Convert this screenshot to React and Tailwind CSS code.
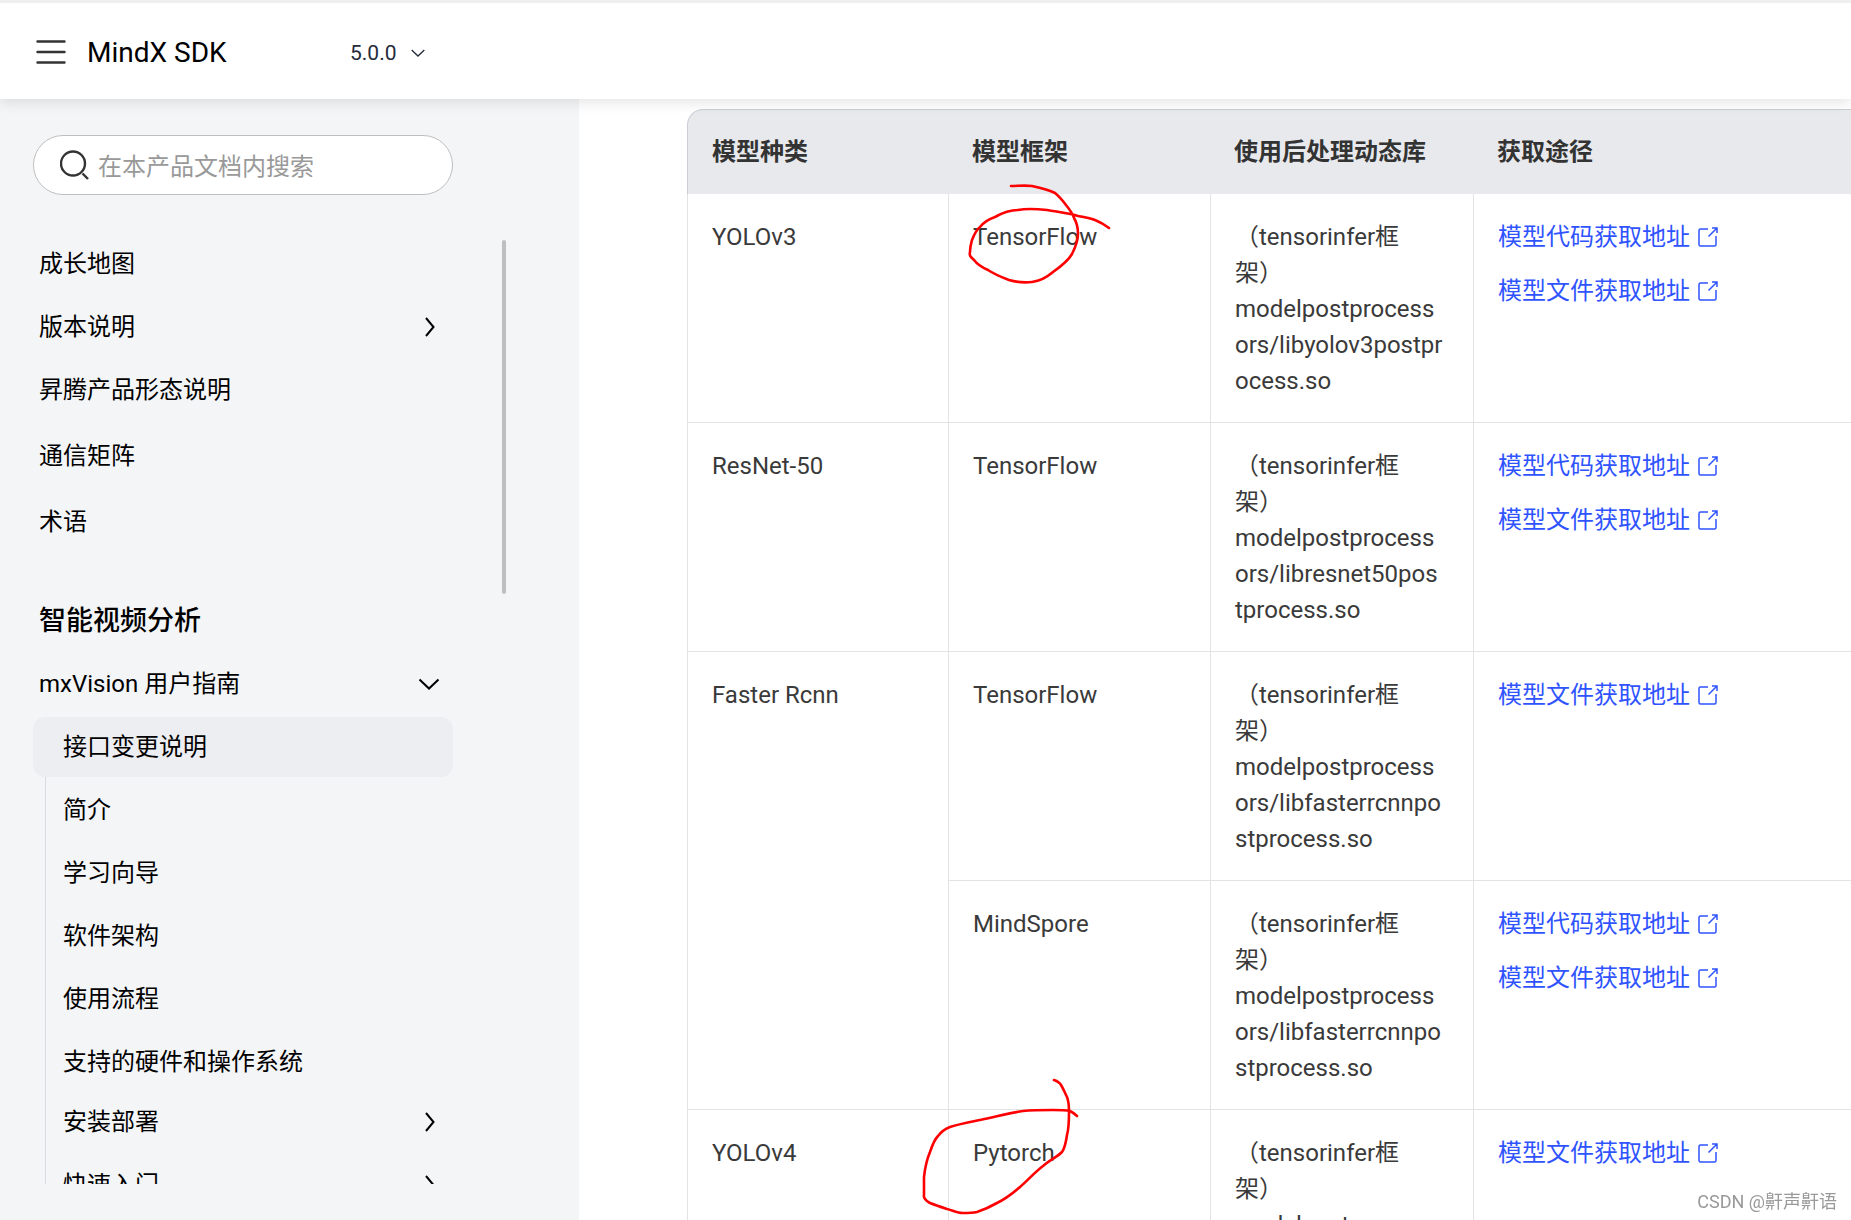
const topItems = [
  { label: '成长地图', gap: 'mb-[3px]' },
  { label: '版本说明', gap: 'mb-[3px]', expandable: true },
  { label: '昇腾产品形态说明', gap: 'mb-1.5' },
  { label: '通信矩阵', gap: 'mb-1.5' },
  { label: '术语', gap: 'mb-0' },
]

const guideItems = [
  { label: '接口变更说明', gap: 'mb-[3px]', active: true },
  { label: '简介', gap: 'mb-[3px]' },
  { label: '学习向导', gap: 'mb-[3px]' },
  { label: '软件架构', gap: 'mb-[3px]' },
  { label: '使用流程', gap: 'mb-[3px]' },
  { label: '支持的硬件和操作系统', gap: 'mb-0' },
  { label: '安装部署', gap: 'mb-[3px]', expandable: true },
  { label: '快速入门', gap: 'mb-[3px]', expandable: true },
]

const CODE = '模型代码获取地址'
const FILE = '模型文件获取地址'

const rows = [
  {
    model: 'YOLOv3',
    framework: 'TensorFlow',
    lib: '（tensorinfer框\n架）\nmodelpostprocess\nors/libyolov3postpr\nocess.so',
    links: [CODE, FILE],
    mark: 'first',
  },
  {
    model: 'ResNet-50',
    framework: 'TensorFlow',
    lib: '（tensorinfer框\n架）\nmodelpostprocess\nors/libresnet50pos\ntprocess.so',
    links: [CODE, FILE],
  },
  {
    model: 'Faster Rcnn',
    span: 2,
    framework: 'TensorFlow',
    lib: '（tensorinfer框\n架）\nmodelpostprocess\nors/libfasterrcnnpo\nstprocess.so',
    links: [FILE],
  },
  {
    framework: 'MindSpore',
    lib: '（tensorinfer框\n架）\nmodelpostprocess\nors/libfasterrcnnpo\nstprocess.so',
    links: [CODE, FILE],
  },
  {
    model: 'YOLOv4',
    framework: 'Pytorch',
    lib: '（tensorinfer框\n架）\nmodelpostprocess\nors/libyolov4postpr\nocess.so',
    links: [FILE],
    mark: 'last',
  },
]

function ChevronRight() {
  return (
    <svg viewBox="0 0 24 24" className="size-6" fill="none" stroke="currentColor" strokeWidth="2" aria-hidden="true">
      <path d="M9 3l7.500 9L9 21" />
    </svg>
  )
}

function ChevronDown({ className }) {
  return (
    <svg viewBox="0 0 24 24" className={className} fill="none" stroke="currentColor" strokeWidth="2" aria-hidden="true">
      <path d="M2.500 7.500l9.500 9 9.500-9" />
    </svg>
  )
}

function ExternalIcon() {
  return (
    <svg viewBox="0 0 20 20" className="size-5" fill="none" stroke="currentColor" strokeWidth="1.500" aria-hidden="true">
      <path d="M10 2H2.500a1.500 1.500 0 0 0-1.500 1.500v14a1.500 1.500 0 0 0 1.500 1.500h14a1.500 1.500 0 0 0 1.500-1.500V9" />
      <path d="M10.500 9.500L19 1M14 1h5v5" />
    </svg>
  )
}

function NavRow({ item, nested }) {
  return (
    <li className={item.gap}>
      <a
        href="#"
        className={`relative flex h-[60px] items-center justify-between rounded-xl pr-3 ${nested ? 'pl-[30px]' : 'pl-1.5'} ${item.active ? 'bg-[#edeef2]' : ''}`}
      >
        <span>{item.label}</span>
        {item.expandable ? <ChevronRight /> : null}
      </a>
    </li>
  )
}

function PenMark({ name }) {
  if (name === 'first') {
    return (
      <svg viewBox="0 0 150 108" className="pointer-events-none absolute -top-3.5 left-3.5 h-[108px] w-[150px]" fill="none" stroke="#ff0000" strokeWidth="2.600" strokeLinecap="round" aria-hidden="true">
        <path d="M48 6C55 6 62 5 69 6C78 8 86 10 92 13C97 17 100 21 103 25C107 30 110 34 111 38C114 43 115 48 115 54C115 61 112 68 109 74C105 81 97 87 90 92C83 98 77 101 69 102C61 103 53 102 46 100C38 97 31 94 25 90C18 87 14 84 11 80C8 77 6 76 7 72C7 67 8 64 9 60C11 55 13 50 17 47C21 42 26 39 32 37C39 33 47 30 55 30C65 28 75 29 84 30C95 32 105 33 115 36C121 37 127 38 132 40C137 42 142 45 146 48" />
      </svg>
    )
  }
  return (
    <svg viewBox="0 0 164 144" className="pointer-events-none absolute -top-9 -left-8 h-[144px] w-[164px]" fill="none" stroke="#ff0000" strokeWidth="2.600" strokeLinecap="round" aria-hidden="true">
      <path d="M137 6C140 7 143 9 144 11C147 16 148 19 150 23C152 28 152 33 152 38C152 46 152 54 150 61C149 68 148 74 145 78C140 83 133 86 126 92C118 98 111 106 103 113C96 119 88 125 80 129C73 133 66 136 60 138C55 139 51 139 46 139C40 139 35 136 30 135C24 133 18 131 13 129C10 127 6 125 7 121C7 115 7 108 7 103C8 94 10 85 13 78C15 72 18 65 21 62C24 58 28 55 33 53C42 50 53 48 63 46C78 43 92 39 106 37C116 36 126 36 136 36C142 36 148 36 153 37C155 38 158 40 160 42" />
    </svg>
  )
}

const cell = 'relative border-b border-l border-[#e3e3e3] px-6 pt-[25px] pb-[23px] align-top'
const headCell = 'border-t border-[#cbced5] bg-[#e8e9ed] p-6 font-bold whitespace-nowrap'

export default function App() {
  return (
    <div className="flex h-screen flex-col overflow-hidden bg-white font-[Roboto,'Noto_Sans_CJK_SC',sans-serif] text-[24px] leading-[36px] text-black">
      <header className="relative z-10 flex h-[99px] shrink-0 items-center border-t-[3px] border-[#efefef] bg-white pt-1 pl-9 shadow-[0_4px_12px_rgba(0,0,0,0.1)]">
        <button type="button" aria-label="菜单" className="mr-[21px] text-[#333]">
          <svg viewBox="0 0 30 30" className="size-[30px]" fill="none" stroke="currentColor" strokeWidth="2.400" strokeLinecap="round" aria-hidden="true">
            <path d="M1.500 3.500h27M1.500 14h27M1.500 24.500h27" />
          </svg>
        </button>
        <h1 className="w-[263px] text-[28px] font-normal">MindX SDK</h1>
        <div className="relative flex items-center text-[#252b3a]">
          <select aria-label="版本" className="w-[76px] appearance-none bg-transparent text-[21px] outline-none">
            <option>5.0.0</option>
          </select>
          <ChevronDown className="pointer-events-none absolute right-0 size-4" />
        </div>
      </header>

      <div className="flex min-h-0 flex-1">
        <aside className="flex w-[579px] shrink-0 flex-col bg-[#f4f5f7] pt-9 pb-9 pl-[33px]">
          <label className="flex h-[60px] w-[420px] shrink-0 items-center gap-2 rounded-full border border-[#bfbfbf] bg-white pl-[26px]">
            <svg viewBox="0 0 30 30" className="size-[30px] text-[#333]" fill="none" stroke="currentColor" strokeWidth="2.400" aria-hidden="true">
              <circle cx="13" cy="13.500" r="12" />
              <path d="M22.500 23.500l5.500 5.500" />
            </svg>
            <input type="search" aria-label="搜索" placeholder="在本产品文档内搜索" className="w-72 bg-transparent pt-[3px] outline-none placeholder:text-[#999]" />
          </label>

          <div className="mt-[39px] flex min-h-0 flex-1 overflow-hidden">
            <nav className="w-[420px]">
              <ul>
                {topItems.map((item) => (
                  <NavRow key={item.label} item={item} />
                ))}
              </ul>
              <h2 className="mt-[39px] mb-[3px] pl-1.5 text-[27px] leading-[60px] font-medium">智能视频分析</h2>
              <button type="button" className="mb-[3px] flex h-[60px] w-full items-center justify-between pr-3 pl-1.5">
                <span>mxVision 用户指南</span>
                <ChevronDown className="size-6" />
              </button>
              <ul className="relative before:absolute before:inset-y-0 before:left-3 before:w-px before:bg-[#d9dadd]">
                {guideItems.map((item) => (
                  <NavRow key={item.label} item={item} nested />
                ))}
              </ul>
            </nav>
            <div className="mt-1.5 ml-[49px] h-[354px] w-1 rounded-full bg-[#bfbfbf]" />
          </div>
        </aside>

        <main className="min-w-0 flex-1 overflow-hidden pt-2.5 pl-[108px]">
          <table className="w-full table-fixed border-separate border-spacing-0 text-[#3a3a3a]">
            <colgroup>
              <col className="w-[261px]" />
              <col className="w-[262px]" />
              <col className="w-[263px]" />
              <col />
            </colgroup>
            <thead>
              <tr className="text-left text-[#333]">
                <th className={`${headCell} rounded-tl-2xl border-l`}>模型种类</th>
                <th className={headCell}>模型框架</th>
                <th className={headCell}>使用后处理动态库</th>
                <th className={headCell}>获取途径</th>
              </tr>
            </thead>
            <tbody>
              {rows.map((row, i) => (
                <tr key={i}>
                  {row.model ? <td rowSpan={row.span || 1} className={cell}>{row.model}</td> : null}
                  <td className={cell}>
                    {row.framework}
                    {row.mark ? <PenMark name={row.mark} /> : null}
                  </td>
                  <td className={`${cell} whitespace-pre`}>{row.lib}</td>
                  <td className={cell}>
                    <div className="flex flex-col items-start gap-[18px]">
                      {row.links.map((link) => (
                        <a key={link} href="#" className="flex items-center gap-2 text-[#2f54ff]">
                          {link}
                          <ExternalIcon />
                        </a>
                      ))}
                    </div>
                  </td>
                </tr>
              ))}
            </tbody>
          </table>
        </main>
      </div>

      <p className="fixed right-3.5 bottom-1 z-20 text-[18px] leading-7 text-[#999]">CSDN @鼾声鼾语</p>
    </div>
  )
}
